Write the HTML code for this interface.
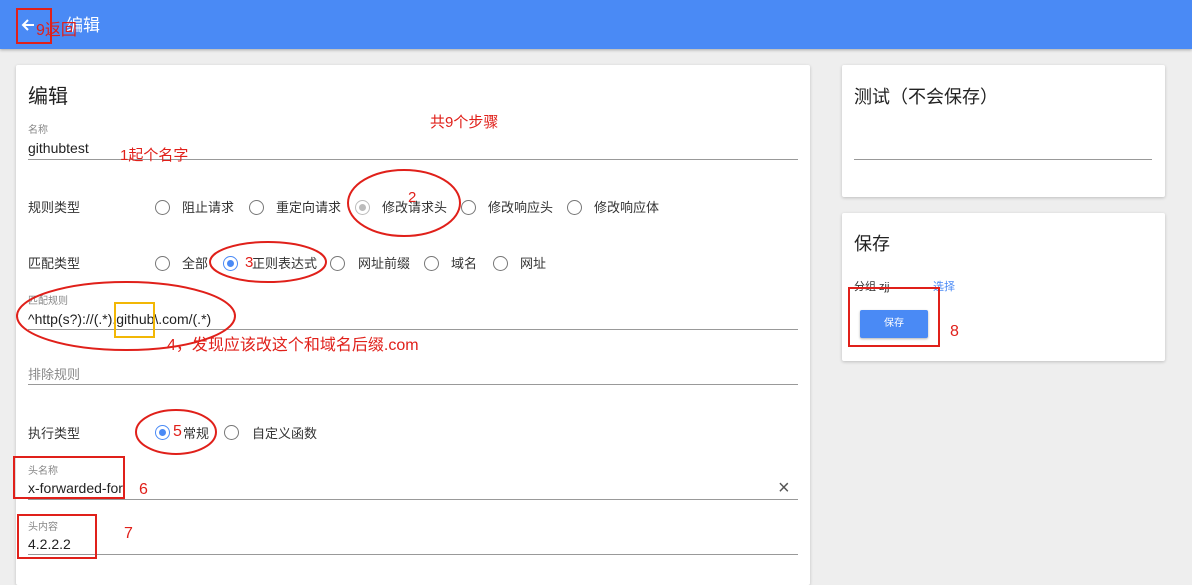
<!DOCTYPE html>
<html><head><meta charset="utf-8"><style>
*{margin:0;padding:0;box-sizing:border-box}
body{width:1192px;height:572px;overflow:hidden;background:#eeeeee;font-family:"Liberation Sans","Noto Sans CJK SC",sans-serif;color:#222;position:relative}
.a{position:absolute;white-space:nowrap;line-height:1.2}
.hdr{left:0;top:0;width:1192px;height:49px;background:#4a8af5;box-shadow:0 1px 3px rgba(0,0,0,.3)}
.card{background:#fff;box-shadow:0 1px 3px rgba(0,0,0,.2);border-radius:2px}
.line{height:1px;background:#999}
.lbl{font-size:13px;color:#333}
.small{font-size:10px;color:#888}
.r{width:15px;height:15px;border:1.5px solid #777;border-radius:50%}
.r.on{border-color:#4a8af5}
.r.on::after{content:"";position:absolute;left:2.5px;top:2.5px;width:7px;height:7px;border-radius:50%;background:#4a8af5}
.r.g{border-color:#bbb}
.r.g::after{content:"";position:absolute;left:2.5px;top:2.5px;width:7px;height:7px;border-radius:50%;background:#bbb}
.red{color:#e0201a}
.box{border:2px solid #e0201a}
</style></head><body>
<div class="a hdr"></div>
<svg class="a" style="left:20px;top:17px" width="16" height="16"><path d="M14 8H3M8 3L3 8l5 5" stroke="#fff" stroke-width="2" fill="none"/></svg>
<div class="a" style="left:66px;top:16px;font-size:17px;color:#fff">编辑</div>
<div class="a box" style="left:16px;top:8px;width:36px;height:36px"></div>
<div class="a red" style="left:36px;top:21px;font-size:16px">9返回</div>

<div class="a card" style="left:16px;top:65px;width:794px;height:520px"></div>
<div class="a card" style="left:842px;top:65px;width:323px;height:132px"></div>
<div class="a card" style="left:842px;top:213px;width:323px;height:148px"></div>

<div class="a" style="left:28px;top:85px;font-size:20px">编辑</div>
<div class="a small" style="left:28px;top:125px">名称</div>
<div class="a" style="left:28px;top:140px;font-size:14px">githubtest</div>
<div class="a line" style="left:28px;top:159px;width:770px"></div>

<div class="a lbl" style="left:28px;top:200px">规则类型</div>
<div class="a r" style="left:155px;top:200px"></div><div class="a lbl" style="left:182px;top:200px">阻止请求</div>
<div class="a r" style="left:249px;top:200px"></div><div class="a lbl" style="left:276px;top:200px">重定向请求</div>
<div class="a r g" style="left:355px;top:200px"></div><div class="a lbl" style="left:382px;top:200px">修改请求头</div>
<div class="a r" style="left:461px;top:200px"></div><div class="a lbl" style="left:488px;top:200px">修改响应头</div>
<div class="a r" style="left:567px;top:200px"></div><div class="a lbl" style="left:594px;top:200px">修改响应体</div>

<div class="a lbl" style="left:28px;top:256px">匹配类型</div>
<div class="a r" style="left:155px;top:256px"></div><div class="a lbl" style="left:182px;top:256px">全部</div>
<div class="a r on" style="left:223px;top:256px"></div><div class="a lbl" style="left:252px;top:256px">正则表达式</div>
<div class="a r" style="left:330px;top:256px"></div><div class="a lbl" style="left:358px;top:256px">网址前缀</div>
<div class="a r" style="left:424px;top:256px"></div><div class="a lbl" style="left:451px;top:256px">域名</div>
<div class="a r" style="left:493px;top:256px"></div><div class="a lbl" style="left:520px;top:256px">网址</div>

<div class="a small" style="left:28px;top:296px">匹配规则</div>
<div class="a" style="left:28px;top:311px;font-size:14px">^http(s?)://(.*).github\.com/(.*)</div>
<div class="a line" style="left:28px;top:329px;width:770px"></div>

<div class="a" style="left:28px;top:367px;font-size:13px;color:#888">排除规则</div>
<div class="a line" style="left:28px;top:384px;width:770px"></div>

<div class="a lbl" style="left:28px;top:426px">执行类型</div>
<div class="a r on" style="left:155px;top:425px"></div><div class="a lbl" style="left:183px;top:426px">常规</div>
<div class="a r" style="left:224px;top:425px"></div><div class="a lbl" style="left:252px;top:426px">自定义函数</div>

<div class="a small" style="left:28px;top:466px">头名称</div>
<div class="a" style="left:28px;top:480px;font-size:14px">x-forwarded-for</div>
<div class="a" style="left:778px;top:476px;font-size:20px;color:#555">×</div>
<div class="a line" style="left:28px;top:499px;width:770px"></div>
<div class="a small" style="left:28px;top:522px">头内容</div>
<div class="a" style="left:28px;top:536px;font-size:14px">4.2.2.2</div>
<div class="a line" style="left:28px;top:554px;width:770px"></div>

<div class="a" style="left:854px;top:87px;font-size:18px">测试（不会保存）</div>
<div class="a line" style="left:854px;top:159px;width:298px"></div>
<div class="a" style="left:854px;top:234px;font-size:18px">保存</div>
<div class="a" style="left:854px;top:281px;font-size:11px;color:#333">分组  zjj</div>
<div class="a" style="left:933px;top:281px;font-size:11px;color:#4a8af5">选择</div>
<div class="a" style="left:860px;top:310px;width:68px;height:28px;background:#4a8af5;border-radius:2px;color:#fff;font-size:10px;text-align:center;line-height:28px;box-shadow:0 1px 2px rgba(0,0,0,.3)">保存</div>

<svg class="a" style="left:0;top:0" width="1192" height="572">
<g fill="none" stroke="#e0201a" stroke-width="2">
<ellipse cx="404" cy="203" rx="56" ry="33"/>
<ellipse cx="268" cy="262" rx="58" ry="20"/>
<ellipse cx="126" cy="316" rx="109" ry="34"/>
<ellipse cx="176" cy="432" rx="40" ry="22"/>
</g>
<rect x="115" y="303" width="39" height="34" fill="none" stroke="#f2b705" stroke-width="2"/>
</svg>
<div class="a red" style="left:430px;top:114px;font-size:15px">共9个步骤</div>
<div class="a red" style="left:120px;top:147px;font-size:15px">1起个名字</div>
<div class="a red" style="left:408px;top:189px;font-size:15px">2</div>
<div class="a red" style="left:245px;top:254px;font-size:15px">3</div>
<div class="a red" style="left:167px;top:336px;font-size:16px">4，发现应该改这个和域名后缀.com</div>
<div class="a red" style="left:173px;top:422px;font-size:16px">5</div>
<div class="a box" style="left:13px;top:456px;width:112px;height:43px"></div>
<div class="a red" style="left:139px;top:480px;font-size:16px">6</div>
<div class="a box" style="left:17px;top:514px;width:80px;height:45px"></div>
<div class="a red" style="left:124px;top:524px;font-size:16px">7</div>
<div class="a box" style="left:848px;top:287px;width:92px;height:60px"></div>
<div class="a red" style="left:950px;top:322px;font-size:16px">8</div>
</body></html>
